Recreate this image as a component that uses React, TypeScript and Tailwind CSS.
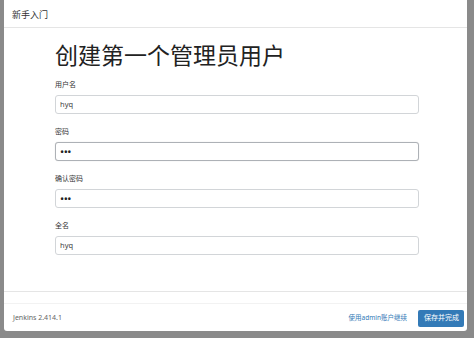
import React from "react";

const font = { fontFamily: '"Noto Sans", "Noto Sans CJK SC", sans-serif' };

function Field({ label, value, focused, password }: { label: string; value: string; focused?: boolean; password?: boolean }) {
  return (
    <div className="flex flex-col">
      <div className="text-[7px] leading-[10px] text-[#333] h-[10px]">{label}</div>
      <div
        className={
          "mt-[5px] h-[19px] w-[364px] rounded-[3px] border bg-white flex items-center px-[4px] " +
          (focused ? "border-[#adb1b6] shadow-[0_0_1px_rgba(0,0,0,0.2)]" : "border-[#d2d5d8]")
        }
      >
        {password ? (
          <span className="text-[11px] leading-none text-[#222] tracking-[-0.5px]">•••</span>
        ) : (
          <span className="text-[7.5px] leading-none text-[#444]">{value}</span>
        )}
      </div>
    </div>
  );
}

export default function App() {
  return (
    <div className="w-[474px] h-[338px] bg-[#8a8a8a] overflow-hidden" style={font}>
      <div className="ml-[4px] w-[463px] h-[331px] bg-white flex flex-col rounded-b-[3px]">
        <div className="h-[28px] border-b border-[#e5e5e5] flex items-center pl-[8px] pt-[2px]">
          <span className="text-[9px] text-[#333]">新手入门</span>
        </div>
        <div className="h-[264px] flex flex-col pl-[51px] border-b border-[#e5e5e5]">
          <div className="mt-[11px] text-[23px] leading-[32px] text-[#222]">创建第一个管理员用户</div>
          <div className="mt-[9px] flex flex-col gap-[13px]">
            <Field label="用户名" value="hyq" />
            <Field label="密码" value="" password focused />
            <Field label="确认密码" value="" password />
            <Field label="全名" value="hyq" />
          </div>
        </div>
        <div className="h-[12px] border-b border-[#f2f2f2]" />
        <div className="flex-1 flex items-center justify-between pl-[9px] pr-[3px] pt-[1px]">
          <span className="text-[7px] text-[#666]">Jenkins 2.414.1</span>
          <div className="flex items-center gap-[11px]">
            <span className="text-[6.5px] text-[#337ab7]">使用admin账户继续</span>
            <div className="h-[17px] pl-[6px] pr-[5px] rounded-[2px] bg-[#337ab7] flex items-center text-[7px] text-white">保存并完成</div>
          </div>
        </div>
      </div>
    </div>
  );
}
